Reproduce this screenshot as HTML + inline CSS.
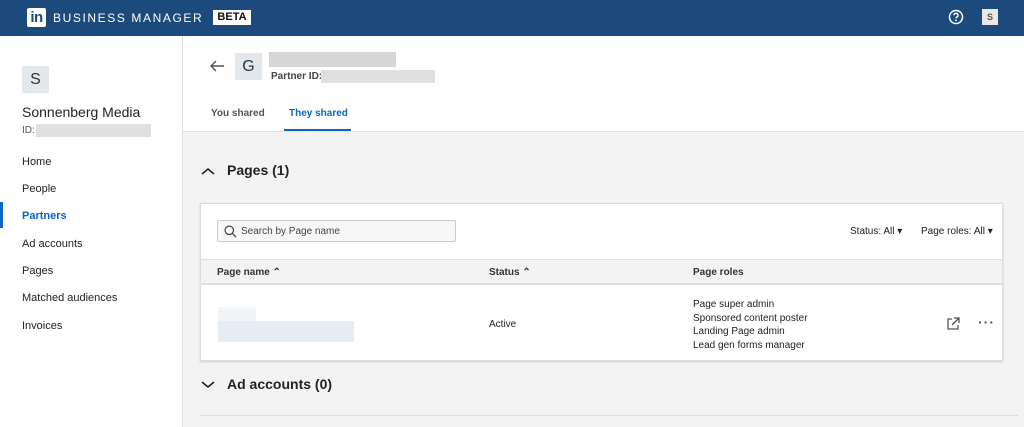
<!DOCTYPE html>
<html><head><meta charset="utf-8"><style>
*{box-sizing:border-box;margin:0;padding:0}
body{width:1024px;height:427px;overflow:hidden;font-family:"Liberation Sans",sans-serif;background:#f3f3f3;position:relative;color:#222}
.hdr{position:absolute;left:0;top:0;width:1024px;height:36px;background:#1d4a7d;box-shadow:0 1px 2px rgba(0,0,0,.3)}
.abs{position:absolute}
.side{position:absolute;left:0;top:36px;width:183px;height:391px;background:#fff;border-right:1px solid #ddd}
.nav{position:absolute;left:22px;font-size:11px;color:#222}
.top{position:absolute;left:183px;top:36px;width:841px;height:96px;background:#fff;border-bottom:1px solid #e0e0e0}
.gray{background:#d6d6d6}
.sm{font-size:10px}
.th{font-size:10px;font-weight:bold;color:#333}
</style></head><body>
<div class="hdr">
 <div class="abs" style="left:27px;top:8px;width:19px;height:19px;background:#fff;border-radius:2px;color:#1d4a7d;font-weight:bold;font-size:15px;line-height:20px;text-align:center;letter-spacing:-0.5px">in</div>
 <div class="abs" style="left:53px;top:11px;color:#fff;font-size:12px;letter-spacing:1.6px;white-space:nowrap">BUSINESS MANAGER</div>
 <div class="abs" style="left:213px;top:10px;width:38px;height:15px;background:#fff;color:#111;font-weight:bold;font-size:11px;line-height:15px;text-align:center">BETA</div>
 <svg class="abs" style="left:948px;top:9px" width="16" height="16" viewBox="0 0 16 16"><circle cx="8" cy="8" r="6.5" fill="none" stroke="#fff" stroke-width="1.5"/><path d="M6 6.3a2 2 0 1 1 2.6 1.9c-.5.2-.6.5-.6 1.1" fill="none" stroke="#fff" stroke-width="1.4"/><circle cx="8" cy="11.3" r=".9" fill="#fff"/></svg>
 <div class="abs" style="left:982px;top:9px;width:16px;height:16px;background:#e8e8e8;color:#555;font-size:9px;font-weight:bold;line-height:16px;text-align:center">S</div>
</div>
<div class="side">
 <div class="abs" style="left:22px;top:30px;width:27px;height:27px;background:#e3e8ec;color:#333;font-size:16px;line-height:27px;text-align:center">S</div>
 <div class="abs" style="left:22px;top:68px;font-size:14px;color:#222">Sonnenberg Media</div>
 <div class="abs sm" style="left:22px;top:89px;color:#555">ID:</div>
 <div class="abs gray" style="left:36px;top:88px;width:115px;height:13px;background:#e0e0e0"></div>
 <div class="nav" style="top:120px">Home</div>
 <div class="nav" style="top:147px">People</div>
 <div class="abs" style="left:0;top:166px;width:3px;height:26px;background:#0a66c2"></div>
 <div class="nav" style="top:174px;color:#0a66c2;font-weight:bold">Partners</div>
 <div class="nav" style="top:202px">Ad accounts</div>
 <div class="nav" style="top:229px">Pages</div>
 <div class="nav" style="top:256px">Matched audiences</div>
 <div class="nav" style="top:284px">Invoices</div>
</div>
<div class="top">
 <svg class="abs" style="left:26px;top:22px" width="16" height="16" viewBox="0 0 16 16"><path d="M15 8H2M7 3L2 8l5 5" fill="none" stroke="#555" stroke-width="1.4"/></svg>
 <div class="abs" style="left:52px;top:17px;width:27px;height:27px;background:#e3e8ec;color:#333;font-size:16px;line-height:27px;text-align:center">G</div>
 <div class="abs gray" style="left:86px;top:16px;width:127px;height:15px"></div>
 <div class="abs sm" style="left:88px;top:35px;color:#444;font-weight:bold">Partner ID:</div>
 <div class="abs" style="left:138px;top:34px;width:114px;height:13px;background:#e0e0e0"></div>
 <div class="abs" style="left:28px;top:72px;font-size:10px;color:#555;font-weight:600">You shared</div>
 <div class="abs" style="left:106px;top:72px;font-size:10px;color:#0a66c2;font-weight:600">They shared</div>
 <div class="abs" style="left:101px;top:93px;width:67px;height:2px;background:#0a66c2"></div>
</div>
<svg class="abs" style="left:200px;top:165px" width="16" height="12" viewBox="0 0 16 12"><path d="M2 9l6-5 6 5" fill="none" stroke="#222" stroke-width="1.5"/></svg>
<div class="abs" style="left:227px;top:162px;font-size:14px;font-weight:bold;color:#222">Pages (1)</div>
<div class="abs" style="left:200px;top:203px;width:803px;height:158px;background:#fff;border:1px solid #ddd;box-shadow:0 1px 2px rgba(0,0,0,.15)">
 <div class="abs" style="left:16px;top:16px;width:239px;height:22px;border:1px solid #ccc;background:#f7f7f7;border-radius:2px">
  <svg class="abs" style="left:6px;top:4px" width="13" height="13" viewBox="0 0 13 13"><circle cx="5.3" cy="5.3" r="4.2" fill="none" stroke="#444" stroke-width="1.2"/><path d="M8.3 8.3l3.8 3.8" stroke="#444" stroke-width="1.3"/></svg>
  <div class="abs" style="left:23px;top:5px;font-size:10px;color:#444">Search by Page name</div>
 </div>
 <div class="abs sm" style="left:649px;top:22px;color:#222">Status: All ▾</div>
 <div class="abs sm" style="left:720px;top:22px;color:#222">Page roles: All ▾</div>
 <div class="abs" style="left:0;top:55px;width:801px;height:26px;background:#f3f3f3;border-top:1px solid #e0e0e0;border-bottom:2px solid #ddd"></div>
 <div class="abs th" style="left:16px;top:63px">Page name ⌃</div>
 <div class="abs th" style="left:288px;top:63px">Status ⌃</div>
 <div class="abs th" style="left:492px;top:63px">Page roles</div>
 <div class="abs" style="left:17px;top:103px;width:38px;height:14px;background:#f2f5f8"></div>
 <div class="abs" style="left:17px;top:117px;width:136px;height:21px;background:#e6edf3"></div>
 <div class="abs sm" style="left:288px;top:115px">Active</div>
 <div class="abs sm" style="left:492px;top:94px;line-height:13.7px">Page super admin<br>Sponsored content poster<br>Landing Page admin<br>Lead gen forms manager</div>
 <svg class="abs" style="left:745px;top:113px" width="14" height="14" viewBox="0 0 14 14"><path d="M6 2H2v10h10V8M8 1h5v5M13 1L6 8" fill="none" stroke="#555" stroke-width="1.3"/></svg>
 <div class="abs" style="left:777px;top:110px;font-size:14px;font-weight:bold;color:#555;letter-spacing:1px">···</div>
</div>
<svg class="abs" style="left:200px;top:379px" width="16" height="12" viewBox="0 0 16 12"><path d="M2 3l6 5 6-5" fill="none" stroke="#222" stroke-width="1.5"/></svg>
<div class="abs" style="left:227px;top:376px;font-size:14px;font-weight:bold;color:#222">Ad accounts (0)</div>
<div class="abs" style="left:200px;top:415px;width:818px;height:1px;background:#ddd"></div>
</body></html>
